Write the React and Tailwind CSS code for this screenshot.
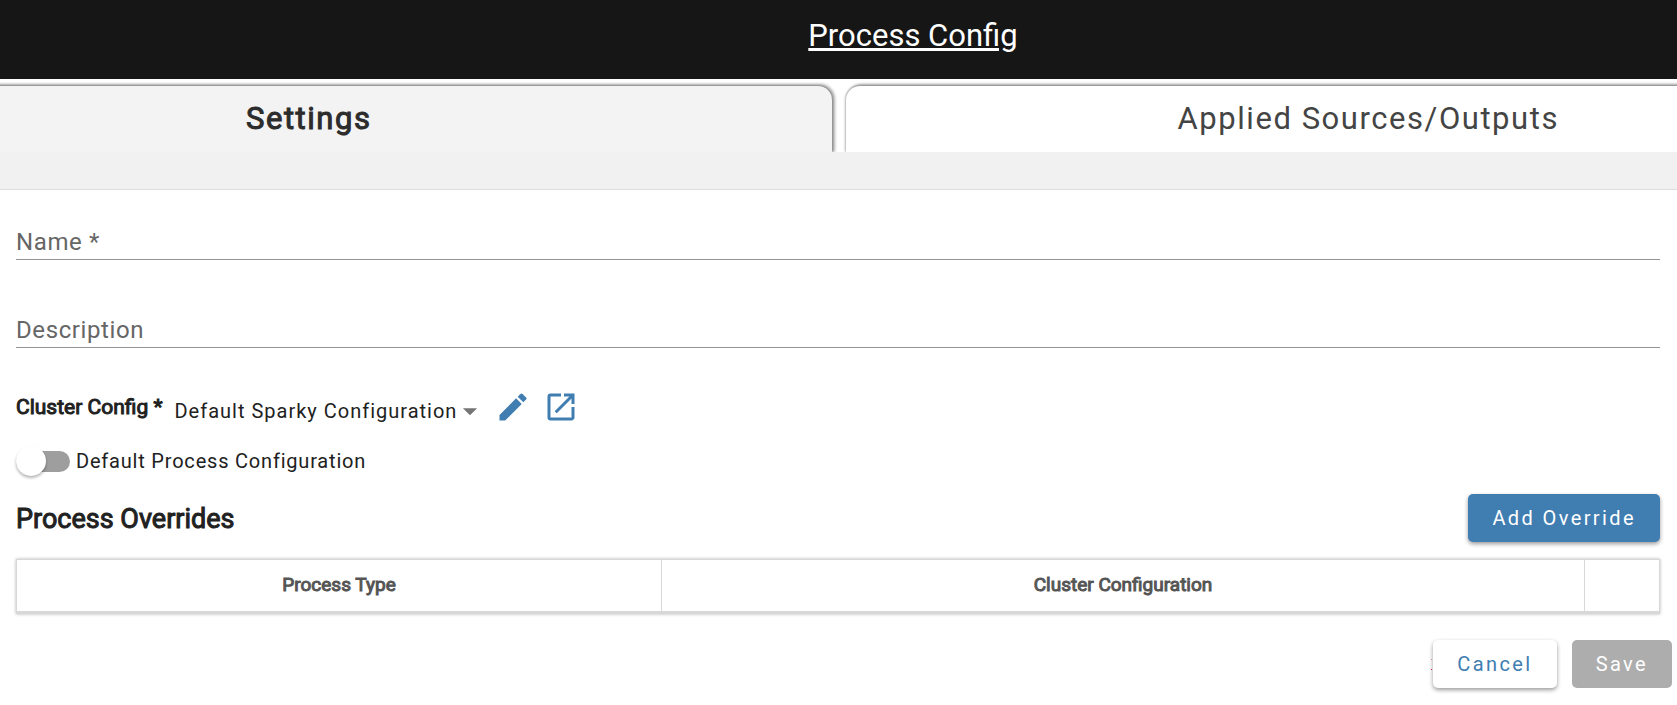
import { useState } from "react";
import { MdEdit, MdOpenInNew, MdArrowDropDown } from "react-icons/md";

const tabs = [
  { id: "settings", label: "Settings" },
  { id: "applied", label: "Applied Sources/Outputs" },
];

const fields = [
  { id: "name", label: "Name *" },
  { id: "description", label: "Description" },
];

export default function App() {
  const [activeTab, setActiveTab] = useState("settings");
  const [values, setValues] = useState({ name: "", description: "" });
  const [isDefault, setIsDefault] = useState(false);

  const handleChange = (e) => {
    setValues({ ...values, [e.target.id]: e.target.value });
  };

  return (
    <div className="bg-white font-['Roboto',sans-serif] text-[#212121]">
      {/* Title bar */}
      <header className="bg-[#161616] h-[79px] pl-[149px] flex justify-center">
        <h1 className="text-white text-[31px] leading-[71px] underline">
          Process Config
        </h1>
      </header>

      {/* Tabs run past both edges of the window */}
      <div className="overflow-hidden pt-[7px]">
        <div role="tablist" className="flex gap-[14px] -mx-[214px]">
          {tabs.map((tab) => (
            <button
              key={tab.id}
              role="tab"
              aria-selected={activeTab === tab.id}
              onClick={() => setActiveTab(tab.id)}
              className={`flex-1 h-[66px] rounded-t-[14px] text-[31px] tracking-wider shadow-[0_0_3px_rgba(0,0,0,0.5),2px_-1px_3px_1px_rgba(0,0,0,0.3)] ${
                activeTab === tab.id
                  ? "bg-[#f3f3f3] text-[#2c2c2c] [-webkit-text-stroke:1px]"
                  : "bg-white text-[#444444]"
              }`}
            >
              {tab.label}
            </button>
          ))}
        </div>
      </div>
      <div className="h-[38px] bg-[#f1f1f1] border-b border-[#dddddd]" />

      <main className="pl-4 pr-[17px] pt-8">
        {/* Label sits inside the empty field */}
        {fields.map((field) => (
          <div key={field.id} className="grid items-center mb-[50px]">
            <label
              htmlFor={field.id}
              className={`col-start-1 row-start-1 pt-0.5 text-2xl tracking-wide text-[#666666] ${
                values[field.id] ? "invisible" : ""
              }`}
            >
              {field.label}
            </label>
            <input
              id={field.id}
              type="text"
              value={values[field.id]}
              onChange={handleChange}
              className="col-start-1 row-start-1 w-full h-[38px] border-b border-[#949494] bg-transparent text-2xl tracking-wide outline-none"
            />
          </div>
        ))}

        {/* Cluster config */}
        <div className="flex items-center -mt-[9px] h-9">
          <label
            htmlFor="cluster"
            className="pt-0.5 text-[21px] [-webkit-text-stroke:1px]"
          >
            Cluster Config *
          </label>
          <div className="flex items-center ml-3 pt-2">
            <select
              id="cluster"
              className="appearance-none bg-transparent text-xl tracking-wider outline-none"
            >
              <option>Default Sparky Configuration</option>
            </select>
            <MdArrowDropDown className="size-[34px] -ml-1 text-[#757575]" />
          </div>
          <button aria-label="Edit cluster config" className="ml-2">
            <MdEdit className="size-9 text-[#407db1]" />
          </button>
          <button aria-label="Open cluster configs" className="ml-3">
            <MdOpenInNew className="size-9 text-[#407db1]" />
          </button>
        </div>

        <label className="flex items-center gap-1.5 mt-[22px] w-max text-xl tracking-[0.04em]">
          <input
            type="checkbox"
            role="switch"
            checked={isDefault}
            onChange={(e) => setIsDefault(e.target.checked)}
            className="peer sr-only"
          />
          <span className="flex items-center w-[54px] h-[21px] rounded-full bg-[#9e9e9e] peer-checked:justify-end">
            <span className="size-[30px] rounded-full bg-white shadow-[0_2px_3px_rgba(0,0,0,0.3)]" />
          </span>
          Default Process Configuration
        </label>

        {/* Overrides */}
        <div className="flex items-center justify-between mt-[19px]">
          <h2 className="pt-0.5 text-[27px] [-webkit-text-stroke:1px]">
            Process Overrides
          </h2>
          <button className="h-12 px-6 rounded-[5px] bg-[#407db1] text-white text-xl tracking-[0.12em] shadow-[0_2px_4px_rgba(0,0,0,0.4)]">
            Add Override
          </button>
        </div>

        <table className="w-full mt-[17px] table-fixed border-collapse text-[19px] text-[#555555] shadow-[0_0_3px_rgba(0,0,0,0.3)]">
          <thead>
            <tr className="h-[53px] border border-b-[3px] border-[#d8d8d8]">
              <th className="w-[645px] border-r border-[#d8d8d8] font-normal [-webkit-text-stroke:1px]">
                Process Type
              </th>
              <th className="border-r border-[#d8d8d8] font-normal [-webkit-text-stroke:1px]">
                Cluster Configuration
              </th>
              <th className="w-[75px]" aria-label="Actions" />
            </tr>
          </thead>
        </table>
      </main>

      <footer className="flex justify-end gap-[15px] mt-[26px] pr-[5px] pb-4">
        <div className="flex items-center gap-px">
          <span className="flex flex-col justify-between w-px h-[11px]">
            <span className="size-px bg-[#f48fb1]" />
            <span className="size-px bg-[#e91e63]" />
          </span>
          <button className="h-12 px-6 rounded-[5px] bg-white text-[#407db1] text-xl tracking-[0.12em] shadow-[0_2px_4px_rgba(0,0,0,0.4)]">
            Cancel
          </button>
        </div>
        <button
          disabled
          className="h-12 px-6 rounded-[5px] bg-[#adadad] text-white text-xl tracking-[0.12em]"
        >
          Save
        </button>
      </footer>
    </div>
  );
}
